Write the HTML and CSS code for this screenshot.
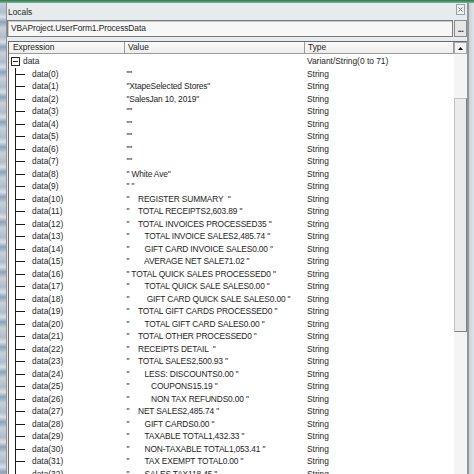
FILE: index.html
```html
<!DOCTYPE html>
<html lang="en">
<head>
    <meta charset="UTF-8">
    <title>Locals</title>
    <link rel="stylesheet" href="styles.css">
</head>
<body>
    <div class="desk">
        <div class="edge"></div>
        <div class="win">
            <div class="title">
                <span>Locals</span>
                <span class="close"><svg width="5" height="5" viewBox="0 0 5 5"><path d="M0.5 0.5L4.5 4.5M4.5 0.5L0.5 4.5" stroke="#777" stroke-width="1"/></svg></span>
            </div>
            <div class="ctx">
                <div class="combo">VBAProject.UserForm1.ProcessData</div>
                <div class="dots">...</div>
            </div>
            <div class="list">
                <div class="main">
                    <div class="head"><span>Expression</span><span>Value</span><span>Type</span></div>
                    <div class="rows">
                        <div class="row root"><span class="expr"><i class="minus"></i>data</span><span class="val"></span><span class="type">Variant/String(0 to 71)</span></div>
                        <div class="row"><span class="expr">data(0)</span><span class="val">""</span><span class="type">String</span></div>
                        <div class="row"><span class="expr">data(1)</span><span class="val">"XtapeSelected Stores"</span><span class="type">String</span></div>
                        <div class="row"><span class="expr">data(2)</span><span class="val">"SalesJan 10, 2019"</span><span class="type">String</span></div>
                        <div class="row"><span class="expr">data(3)</span><span class="val">""</span><span class="type">String</span></div>
                        <div class="row"><span class="expr">data(4)</span><span class="val">""</span><span class="type">String</span></div>
                        <div class="row"><span class="expr">data(5)</span><span class="val">""</span><span class="type">String</span></div>
                        <div class="row"><span class="expr">data(6)</span><span class="val">""</span><span class="type">String</span></div>
                        <div class="row"><span class="expr">data(7)</span><span class="val">""</span><span class="type">String</span></div>
                        <div class="row"><span class="expr">data(8)</span><span class="val">" White Ave"</span><span class="type">String</span></div>
                        <div class="row"><span class="expr">data(9)</span><span class="val">" "</span><span class="type">String</span></div>
                        <div class="row"><span class="expr">data(10)</span><span class="val">"    REGISTER SUMMARY  "</span><span class="type">String</span></div>
                        <div class="row"><span class="expr">data(11)</span><span class="val">"    TOTAL RECEIPTS2,603.89 "</span><span class="type">String</span></div>
                        <div class="row"><span class="expr">data(12)</span><span class="val">"    TOTAL INVOICES PROCESSED35 "</span><span class="type">String</span></div>
                        <div class="row"><span class="expr">data(13)</span><span class="val">"       TOTAL INVOICE SALES2,485.74 "</span><span class="type">String</span></div>
                        <div class="row"><span class="expr">data(14)</span><span class="val">"       GIFT CARD INVOICE SALES0.00 "</span><span class="type">String</span></div>
                        <div class="row"><span class="expr">data(15)</span><span class="val">"       AVERAGE NET SALE71.02 "</span><span class="type">String</span></div>
                        <div class="row"><span class="expr">data(16)</span><span class="val">" TOTAL QUICK SALES PROCESSED0 "</span><span class="type">String</span></div>
                        <div class="row"><span class="expr">data(17)</span><span class="val">"       TOTAL QUICK SALE SALES0.00 "</span><span class="type">String</span></div>
                        <div class="row"><span class="expr">data(18)</span><span class="val">"        GIFT CARD QUICK SALE SALES0.00 "</span><span class="type">String</span></div>
                        <div class="row"><span class="expr">data(19)</span><span class="val">"    TOTAL GIFT CARDS PROCESSED0 "</span><span class="type">String</span></div>
                        <div class="row"><span class="expr">data(20)</span><span class="val">"       TOTAL GIFT CARD SALES0.00 "</span><span class="type">String</span></div>
                        <div class="row"><span class="expr">data(21)</span><span class="val">"    TOTAL OTHER PROCESSED0 "</span><span class="type">String</span></div>
                        <div class="row"><span class="expr">data(22)</span><span class="val">"    RECEIPTS DETAIL  "</span><span class="type">String</span></div>
                        <div class="row"><span class="expr">data(23)</span><span class="val">"    TOTAL SALES2,500.93 "</span><span class="type">String</span></div>
                        <div class="row"><span class="expr">data(24)</span><span class="val">"       LESS: DISCOUNTS0.00 "</span><span class="type">String</span></div>
                        <div class="row"><span class="expr">data(25)</span><span class="val">"          COUPONS15.19 "</span><span class="type">String</span></div>
                        <div class="row"><span class="expr">data(26)</span><span class="val">"          NON TAX REFUNDS0.00 "</span><span class="type">String</span></div>
                        <div class="row"><span class="expr">data(27)</span><span class="val">"    NET SALES2,485.74 "</span><span class="type">String</span></div>
                        <div class="row"><span class="expr">data(28)</span><span class="val">"       GIFT CARDS0.00 "</span><span class="type">String</span></div>
                        <div class="row"><span class="expr">data(29)</span><span class="val">"       TAXABLE TOTAL1,432.33 "</span><span class="type">String</span></div>
                        <div class="row"><span class="expr">data(30)</span><span class="val">"       NON-TAXABLE TOTAL1,053.41 "</span><span class="type">String</span></div>
                        <div class="row"><span class="expr">data(31)</span><span class="val">"       TAX EXEMPT TOTAL0.00 "</span><span class="type">String</span></div>
                        <div class="row"><span class="expr">data(32)</span><span class="val">"       SALES TAX118.45 "</span><span class="type">String</span></div>
                    </div>
                </div>
                <div class="vscroll">
                    <div class="up"><svg width="5" height="3" viewBox="0 0 5 3"><path d="M2.5 0L5 3H0Z" fill="#111"/></svg></div>
                    <div class="track"><div class="thumb"></div></div>
                </div>
            </div>
        </div>
        <div class="side"></div>
    </div>
</body>
</html>
```

FILE: styles.css
```css
html, body{
    margin: 0;
}
body{
    width: 474px;
    height: 474px;
    overflow: hidden;
    background: linear-gradient(#2c7a4e, #7cb393 3px, #d4dbe0 5px);
    font-family: "Liberation Sans", Arial, sans-serif;
    font-size: 8.4px;
    color: #1e1e1e;
}
.desk{
    display: flex;
    height: 471px;
    padding-top: 3px;
}
.edge{
    width: 6px;
    background: repeating-linear-gradient(#c7d0d8 0, #aebccb 9px, #d9dfe5 14px, #8ea3b8 19px, #c7d0d8 25px);
}
.win{
    width: 460px;
    background: #e8ebee;
    border-left: 1px solid #8c9399;
    border-right: 2px solid #8f969c;
    display: flex;
    flex-direction: column;
}
.side{
    flex: 1;
    background: linear-gradient(90deg, #c9d0d6, #e1e5e8);
}
.title{
    height: 17px;
    display: flex;
    align-items: center;
    justify-content: space-between;
    padding: 0 2px 0 1px;
}
.close{
    width: 9px;
    height: 11px;
    box-sizing: border-box;
    border: 1px solid #9aa0a6;
    background: #eef0f2;
    display: flex;
    align-items: center;
    justify-content: center;
    align-self: flex-start;
    margin-top: 1px;
}
.ctx{
    display: flex;
    gap: 1px;
    height: 17px;
}
.combo{
    flex: 1;
    border: 1px solid #7b7b7b;
    background: #f7f7f7;
    box-shadow: inset 1px 1px 0 #c9c9c9;
    padding-left: 3px;
    line-height: 15px;
    letter-spacing: -0.08px;
}
.dots{
    width: 13px;
    box-sizing: border-box;
    border: 1px solid #8a8a8a;
    background: #e6e6e6;
    font-weight: bold;
    text-align: center;
    line-height: 17px;
    letter-spacing: -0.5px;
}
.list{
    margin: 4px 0 0 1px;
    flex: 1;
    min-height: 0;
    border-top: 1px solid #6a6a6a;
    border-left: 1px solid #6a6a6a;
    background: #fff;
    display: grid;
    grid-template-columns: 1fr 13px;
    overflow: hidden;
}
.main{
    overflow: hidden;
}
.head, .row{
    display: grid;
    grid-template-columns: 116px 180px 1fr;
}
.head{
    height: 11px;
    border-bottom: 1px solid #9c9c9c;
    background: linear-gradient(#fbfbfb, #ededed);
}
.head span{
    border-right: 1px solid #9a9a9a;
    padding-left: 3px;
    line-height: 11px;
}
.head span:first-child{
    padding-left: 4px;
}
.rows{
    padding-top: 1px;
}
.row{
    height: 12.5px;
    line-height: 12.5px;
    white-space: pre;
}
.row span{
    overflow: hidden;
}
.expr{
    padding-left: 23px;
    background:
        linear-gradient(#1a1a1a, #1a1a1a) 6px 0 / 1px 100% no-repeat,
        linear-gradient(#1a1a1a, #1a1a1a) 7px 6px / 9px 1px no-repeat;
}
.root .expr{
    padding-left: 2px;
    display: flex;
    align-items: center;
    background: none;
}
.minus{
    width: 9px;
    height: 9px;
    box-sizing: border-box;
    border: 1px solid #2a2a2a;
    margin-right: 3px;
    background: linear-gradient(#2a2a2a, #2a2a2a) center / 5px 1px no-repeat;
}
.val{
    padding-left: 1.5px;
    letter-spacing: -0.15px;
}
.type{
    padding-left: 2px;
}
.vscroll{
    display: flex;
    flex-direction: column;
    background: #f2f2f2;
}
.up{
    height: 12px;
    box-sizing: border-box;
    border: 1px solid #a9a9a9;
    background: #f3f3f3;
    display: flex;
    align-items: center;
    justify-content: center;
}
.track{
    flex: 1;
    background: #f4f4f4;
}
.thumb{
    margin-top: 44px;
    height: 234px;
    box-sizing: border-box;
    background: #ebebeb;
    border: 1px solid #c2c2c2;
    border-right-color: #7f7f7f;
    border-bottom-color: #7f7f7f;
}
```
